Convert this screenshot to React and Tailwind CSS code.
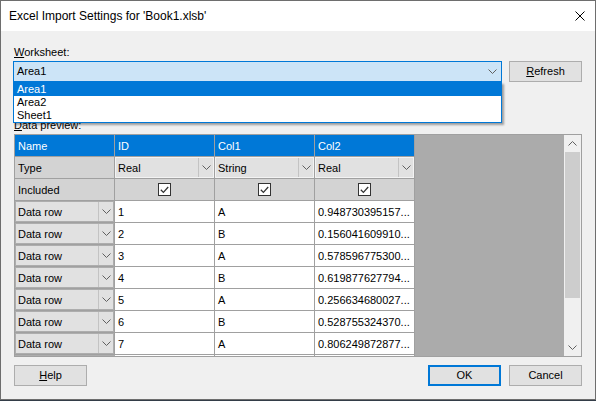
import React from "react";

const ROWS = [
  ["1", "A", "0.948730395157..."],
  ["2", "B", "0.156041609910..."],
  ["3", "A", "0.578596775300..."],
  ["4", "B", "0.619877627794..."],
  ["5", "A", "0.256634680027..."],
  ["6", "B", "0.528755324370..."],
  ["7", "A", "0.806249872877..."],
];

const Chevron = ({ className = "" }) => (
  <svg width="9" height="5" viewBox="0 0 9 5" className={className}>
    <path d="M0.5 0.5 L4.5 4.5 L8.5 0.5" fill="none" stroke="#606060" strokeWidth="1" />
  </svg>
);

const Check = () => (
  <div className="flex h-[13px] w-[13px] items-center justify-center border border-[#333333] bg-white">
    <svg width="9" height="8" viewBox="0 0 9 8">
      <path d="M0.8 3.8 L3.4 6.4 L8.2 1" fill="none" stroke="#333333" strokeWidth="1.3" />
    </svg>
  </div>
);

// combo drawn inside a grid cell
const CellCombo = ({ text, dark }) => (
  <div
    className={`flex h-full items-center border ${
      dark ? "border-[#adadad]" : "border-[#f3f3f3]"
    } bg-[#e1e1e1]`}
  >
    <span className="flex-1 truncate pl-[2px] pt-px">{text}</span>
    <div className="flex h-full w-[15px] items-center justify-center border-l border-[#c3c3c3]">
      <Chevron />
    </div>
  </div>
);

const Cell = ({ children, className = "" }) => (
  <div className={`h-full w-[100px] shrink-0 border-r border-[#a0a0a0] ${className}`}>{children}</div>
);

const Row = ({ children }) => <div className="flex h-[22px] shrink-0 border-b border-[#a0a0a0]">{children}</div>;

const Button = ({ children, primary }) => (
  <button
    className={`flex h-[21px] w-[73px] items-center justify-center bg-[#e1e1e1] ${
      primary ? "border-2 border-[#0078d7]" : "border border-[#adadad]"
    }`}
  >
    {children}
  </button>
);

export default function App() {
  return (
    <div className="h-[401px] w-[596px] bg-[#333d48] font-['Liberation_Sans',Arial,sans-serif] text-[11px] leading-[13px] text-black">
      <div className="flex h-[400px] w-[596px] flex-col border border-[#6e6e6e] bg-[#f0f0f0]">
        {/* title bar */}
        <div className="flex h-[30px] shrink-0 items-center justify-between bg-white pl-[8px] pr-[10px]">
          <span className="text-[12px]">Excel Import Settings for 'Book1.xlsb'</span>
          <svg width="10" height="10" viewBox="0 0 10 10">
            <path d="M0.5 0.5 L9.5 9.5 M9.5 0.5 L0.5 9.5" stroke="#000" strokeWidth="1" />
          </svg>
        </div>

        <div className="flex flex-1 flex-col pl-[12px] pr-[13px] pt-[15px]">
          <div className="ml-[1px] h-[13px]">
            <span className="underline">W</span>orksheet:
          </div>

          <div className="mt-[2px] flex h-[21px] gap-[7px]">
            <div className="relative w-[489px]">
              <div className="flex h-full items-center border border-[#0078d7] bg-[#cce4f7] pl-[3px] pr-[4px]">
                <span className="flex-1">Area1</span>
                <Chevron />
              </div>
              <div className="absolute left-0 top-[21px] z-10 w-[489px] border border-[#0078d7] bg-white shadow-[2px_2px_2px_rgba(0,0,0,0.35)]">
                <div className="h-[13px] bg-[#0078d7] pl-[3px] text-white">Area1</div>
                <div className="h-[13px] pl-[3px]">Area2</div>
                <div className="h-[13px] pl-[3px]">Sheet1</div>
              </div>
            </div>
            <Button>
              <span className="underline">R</span>efresh
            </Button>
          </div>

          <div className="ml-[1px] mt-[37px] h-[13px]">
            <span className="underline">D</span>ata preview:
          </div>

          {/* grid */}
          <div className="ml-[1px] mt-[2px] flex h-[223px] border border-[#a0a0a0] bg-[#ababab]">
            <div className="flex w-[400px] shrink-0 flex-col overflow-hidden">
              <Row>
                {["Name", "ID", "Col1", "Col2"].map((h) => (
                  <Cell key={h} className="bg-[#0078d7] pl-[3px] pt-[5px] text-white">
                    {h}
                  </Cell>
                ))}
              </Row>
              <Row>
                <Cell className="bg-[#d3d3d3] pl-[3px] pt-[5px]">Type</Cell>
                <Cell>
                  <CellCombo text="Real" />
                </Cell>
                <Cell>
                  <CellCombo text="String" />
                </Cell>
                <Cell>
                  <CellCombo text="Real" />
                </Cell>
              </Row>
              <Row>
                <Cell className="bg-[#d3d3d3] pl-[3px] pt-[5px]">Included</Cell>
                {[0, 1, 2].map((i) => (
                  <Cell key={i} className="flex items-center justify-center bg-[#d3d3d3]">
                    <Check />
                  </Cell>
                ))}
              </Row>
              {ROWS.map(([id, c1, c2]) => (
                <Row key={id}>
                  <Cell>
                    <CellCombo text="Data row" dark />
                  </Cell>
                  <Cell className="bg-white pl-[3px] pt-[5px]">{id}</Cell>
                  <Cell className="bg-white pl-[3px] pt-[5px]">{c1}</Cell>
                  <Cell className="bg-white pl-[3px] pt-[5px]">{c2}</Cell>
                </Row>
              ))}
              {/* next row, only its top edge is visible */}
              <Row>
                <Cell className="border-l border-t border-[#adadad] bg-[#e1e1e1]" />
                <Cell className="bg-white" />
                <Cell className="bg-white" />
                <Cell className="bg-white" />
              </Row>
            </div>
            <div className="flex-1" />
            {/* scrollbar */}
            <div className="flex w-[17px] shrink-0 flex-col bg-[#f0f0f0]">
              <div className="flex h-[17px] items-center justify-center">
                <Chevron className="rotate-180" />
              </div>
              <div className="mx-[1px] h-[146px] bg-[#cdcdcd]" />
              <div className="flex-1" />
              <div className="flex h-[17px] items-center justify-center">
                <Chevron />
              </div>
            </div>
          </div>

          <div className="ml-[1px] mt-[8px] flex">
            <Button>
              <span className="underline">H</span>elp
            </Button>
            <div className="flex-1" />
            <div className="flex gap-[8px]">
              <Button primary>OK</Button>
              <Button>Cancel</Button>
            </div>
          </div>
        </div>
      </div>
    </div>
  );
}
